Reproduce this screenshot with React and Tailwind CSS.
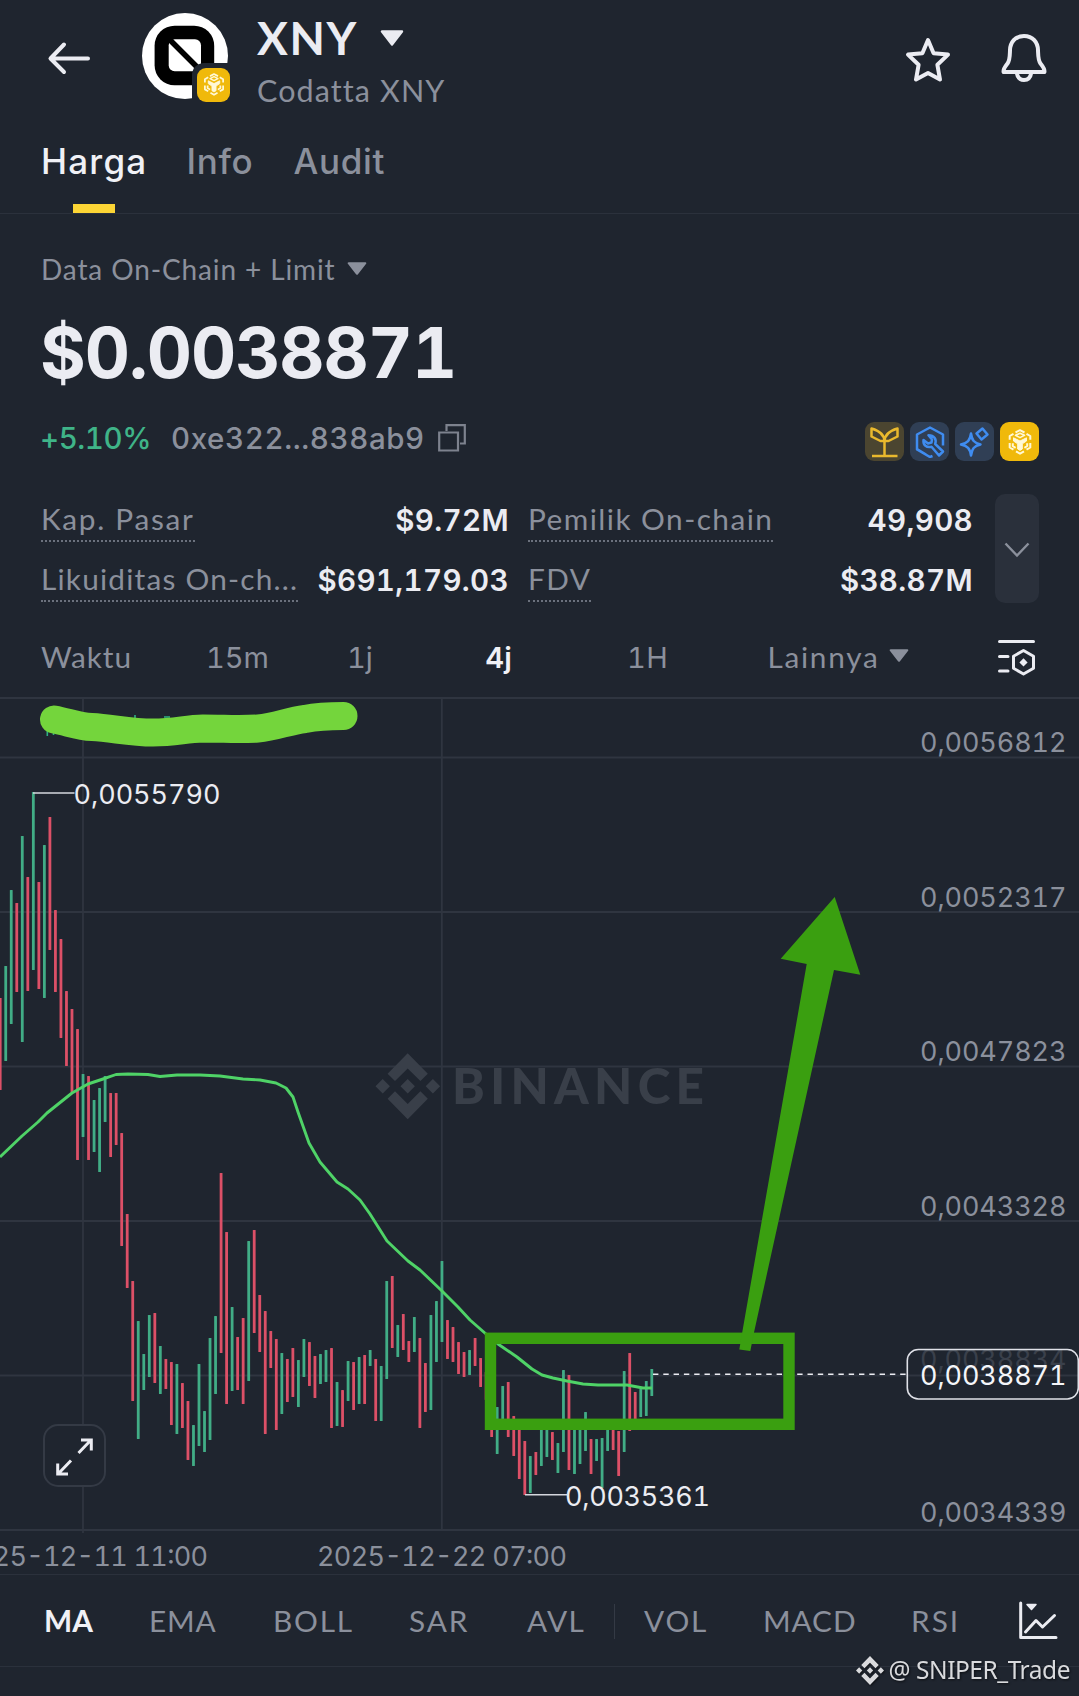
import React from "react";

/* Candle ranges, oldest first: [direction, high y, low y] */
const CANDLES = [
  ["d",998,1090],["u",966,1061],["u",890,1024],["d",903,992],["u",836,1042],["d",877,991],["u",792,970],["d",882,989],
  ["u",845,998],["d",817,950],["d",910,992],["d",939,1038],["d",991,1066],["d",1009,1092],["d",1029,1160],["u",1074,1137],
  ["d",1076,1160],["u",1100,1152],["u",1088,1172],["u",1076,1122],["d",1093,1157],["d",1093,1145],["d",1133,1246],["d",1214,1288],
  ["d",1281,1401],["u",1321,1439],["u",1354,1390],["u",1315,1377],["d",1313,1383],["u",1346,1394],["d",1359,1389],["d",1362,1425],
  ["u",1364,1434],["d",1383,1428],["d",1401,1460],["u",1425,1466],["u",1364,1446],["u",1411,1452],["u",1338,1440],["u",1316,1394],
  ["d",1173,1353],["d",1232,1404],["u",1307,1391],["d",1337,1390],["d",1318,1404],["u",1241,1381],["d",1230,1333],["d",1295,1352],
  ["d",1311,1434],["d",1331,1368],["d",1339,1430],["u",1353,1414],["d",1359,1402],["d",1348,1397],["u",1360,1407],["u",1339,1377],
  ["d",1342,1386],["d",1356,1398],["u",1354,1384],["u",1350,1382],["d",1348,1428],["u",1382,1426],["d",1390,1427],["u",1361,1401],
  ["d",1362,1410],["u",1357,1404],["d",1355,1404],["u",1350,1366],["d",1359,1421],["u",1366,1421],["u",1281,1379],["d",1276,1348],
  ["u",1325,1357],["d",1314,1350],["d",1341,1362],["u",1317,1352],["d",1338,1428],["d",1363,1412],["u",1315,1410],["u",1301,1362],
  ["u",1261,1342],["d",1320,1359],["d",1327,1362],["d",1342,1374],["d",1352,1377],["u",1350,1375],["d",1338,1366],["d",1358,1387],
  ["d",1372,1400],["d",1395,1437],["u",1407,1454],["u",1386,1420],["d",1382,1437],["d",1416,1456],["d",1428,1479],["d",1441,1495],
  ["u",1456,1493],["d",1452,1475],["u",1425,1466],["u",1425,1457],["d",1432,1460],["u",1443,1473],["u",1370,1452],["d",1375,1470],
  ["u",1425,1474],["u",1429,1464],["u",1412,1451],["d",1439,1474],["u",1439,1461],["u",1438,1488],["u",1425,1451],["d",1425,1450],
  ["d",1431,1476],["u",1371,1452],["d",1353,1431],["d",1392,1420],["u",1389,1417],["u",1381,1416],["u",1369,1396],
];
const STEP = 5.522;

const MA_LINE =
  "0,1157 22,1136 38,1122 47,1113 72,1093 88,1084 103,1079 116,1074.5 128,1074 148,1074.5 160,1076.500 177,1075 200,1075 220,1076 243,1079 260,1080 276,1083 286,1088 293,1097 298,1112 309,1143 320,1162 337,1182 348,1189 360,1200 370,1214 387,1241 408,1261 420,1270 442,1291 458,1307 470,1320 486,1334 498,1344 517,1357 532,1369 542,1375 553,1378 567,1381 583,1384 598,1385 627,1385 643,1388 652,1388";

const AXIS = [
  ["0,0056812", 751.5],
  ["0,0052317", 907],
  ["0,0047823", 1061],
  ["0,0043328", 1216],
  ["0,0034339", 1521.5],
];

function Caret({ className }) {
  return (
    <svg className={className} viewBox="0 0 24 16" preserveAspectRatio="none">
      <path d="M2 1.5H22L12 14.5Z" fill="currentColor" stroke="currentColor" strokeWidth="2.4" strokeLinejoin="round" />
    </svg>
  );
}

function ChainMark({ className }) {
  return (
    <svg className={className} viewBox="0 0 24 26" fill="none" stroke="#fff8d6" strokeWidth="2" strokeLinejoin="round">
      <path d="M7.5 3.500 12 1.200 16.500 3.500M18.500 4.800 22.300 7V10.800M22.300 14V18.500L18.500 20.700M16 22.400 12 24.700 8 22.400M5.500 20.700 1.700 18.500V14M1.700 10.800V7L5.500 4.800" />
      <path d="M7.500 6.300 12 4.200 16.500 6.300 12 8.600Z" strokeWidth="1.600" />
      <path d="M5.500 8.800 12 12 18.500 8.800V12L14.300 14.800V20L12 21.400 9.700 20V14.800L5.500 12Z" fill="#fff8d6" strokeWidth="1" />
      <path d="M4.800 14.200V17L7.600 18.800M19.200 14.200V17L16.400 18.800" />
    </svg>
  );
}

function BinanceMark({ className }) {
  return (
    <svg className={className} viewBox="0 0 64 66" fill="currentColor">
      <path d="M32 0 52 20.2 44.6 27.6 32 15 19.4 27.6 12 20.2Z" />
      <path d="M32 66 52 45.8 44.6 38.4 32 51 19.4 38.4 12 45.8Z" />
      <path d="M32 25.8 39.2 33 32 40.2 24.8 33Z" />
      <path d="M7.2 25.8 14.4 33 7.2 40.2 0 33Z" />
      <path d="M56.8 25.8 64 33 56.8 40.2 49.6 33Z" />
    </svg>
  );
}

function Header() {
  return (
    <header className="flex h-[126px]">
      <svg className="ml-[47px] mt-[40px] h-[36px] w-[44px] shrink-0" viewBox="0 0 44 36" fill="none" stroke="#ebecf2" strokeWidth="4" strokeLinecap="round" strokeLinejoin="round">
        <path d="M41 18.500H4M17 4.500 3.500 18.500 17 32" />
      </svg>
      <div className="relative ml-[51px] mt-[13px] h-[89px] w-[88px] shrink-0">
        <svg className="h-[86px] w-[86px]" viewBox="0 0 86 86">
          <circle cx="43" cy="43" r="43" fill="#fff" />
          <rect x="12.6" y="12.7" width="59.6" height="59.6" rx="20" fill="#000" />
          <rect x="26.7" y="26.3" width="32.3" height="32" rx="6" fill="#fff" />
          <path d="M26 25 58 57" stroke="#000" strokeWidth="5.500" />
        </svg>
        <div className="absolute left-[50px] top-[50px] flex h-[43px] w-[43px] items-center justify-center rounded-tl-[12px] bg-[#1f252f]">
          <div className="flex h-[34px] w-[33px] items-center justify-center rounded-[9px] bg-[#f0b90b]">
            <ChainMark className="h-[23px] w-[22px]" />
          </div>
        </div>
      </div>
      <div className="ml-[27px] mt-[13px] flex flex-col">
        <div className="flex items-start">
          <span className="w-[123px] font-['Lato',sans-serif] text-[46px] font-bold leading-[50px] tracking-[1.6px] text-[#ebecf2]">XNY</span>
          <Caret className="mt-[17px] h-[16px] w-[24px] text-[#ebecf2]" />
        </div>
        <span className="mt-[7px] whitespace-nowrap font-['Lato',sans-serif] text-[30.5px] leading-[40px] tracking-[1.1px] text-[#8b909c]">Codatta XNY</span>
      </div>
      <svg className="ml-auto mt-[36px] h-[48px] w-[48px]" viewBox="0 0 48 48" fill="none" stroke="#ebecf2" strokeWidth="4" strokeLinejoin="round">
        <path d="M24 4 29.6 17.2 44 18.6 33.4 28.8 36 43.5 24 37 12 43.5 14.6 28.8 4 18.6 18.4 17.2Z" />
      </svg>
      <svg className="ml-[47px] mr-[30px] mt-[32px] h-[52px] w-[50px]" viewBox="0 0 50 52" fill="none" stroke="#ebecf2" strokeWidth="4" strokeLinejoin="round">
        <path d="M25 4C16 4 11.3 10.5 11 18 10.8 24 11 28 8.5 31.5 6.2 34.5 4 37 4.6 40H45.4C46 37 43.8 34.5 41.5 31.5 39 28 39.2 24 39 18 38.7 10.5 34 4 25 4Z" />
        <path d="M17.8 41C18.5 45.5 21.2 48 25 48S31.5 45.5 32.2 41" />
      </svg>
    </header>
  );
}

function PageTabs() {
  return (
    <nav className="flex h-[88px] border-b border-[#2b313c] pl-[41px] pt-[10px] font-['Inter',sans-serif] text-[35px] font-medium leading-[50px] tracking-[0.7px] text-[#8b909c]">
      <div className="flex w-[145.5px] flex-col">
        <span className="tracking-[1.2px] text-[#f0f1f6]">Harga</span>
        <span className="ml-[32px] mt-[18px] h-[9px] w-[42px] bg-[#fcd535]" />
      </div>
      <span className="w-[107px]">Info</span>
      <span>Audit</span>
    </nav>
  );
}

function TokenBadges() {
  return (
    <div className="ml-auto flex gap-[6px]">
      <span className="flex h-[39px] w-[39px] items-center justify-center rounded-[9px] bg-[#4b4530]">
        <svg className="h-[32px] w-[30px]" viewBox="0 0 30 32" fill="none" stroke="#eab92d" strokeWidth="2.5" strokeLinejoin="round">
          <path d="M14.500 30V15M2 30H27.500M14.500 15.500C14.500 9 10 5 1.500 2.500V10.500L10.500 15H18.500L27.500 10.500V2.500C19 5 14.500 9 14.500 15.500" />
        </svg>
      </span>
      <span className="flex h-[39px] w-[39px] items-center justify-center rounded-[9px] bg-[#303f55]">
        <svg className="h-[32px] w-[30px]" viewBox="0 0 30 32" fill="none" stroke="#3f8cf0" strokeWidth="2.5" strokeLinejoin="round">
          <path d="M17.500 30 15 31 2 23.500V8.500L15 1.500 28 8.500V19.500M2 23 11 28.500" />
          <path d="M8.500 14C8 19 11.500 22 16.500 20.800L24 29.500 28 25.500 20.200 18C21.800 13 19 9.200 13.500 9.200L17 13.500 16.500 16.500 13 17.500Z" />
        </svg>
      </span>
      <span className="flex h-[39px] w-[39px] items-center justify-center rounded-[9px] bg-[#303f55]">
        <svg className="h-[32px] w-[32px]" viewBox="0 0 32 32" fill="none" stroke="#3f8cf0" strokeWidth="2.5" strokeLinejoin="round">
          <path d="M12 7.500C13 14.500 15 17 21.500 18.500 15 20 13 22.500 12 29.500 11 22.500 8.500 20 2 18.500 8.500 17 11 14.500 12 7.500Z" />
          <path d="M23.500 2.500 28.500 8.500 22.500 13.500 17.500 7.500Z" />
        </svg>
      </span>
      <span className="flex h-[39px] w-[39px] items-center justify-center rounded-[9px] bg-[#f0b90b]">
        <ChainMark className="h-[26px] w-[24px]" />
      </span>
    </div>
  );
}

function Stat({ label, value, labelClass = "tracking-[1.45px]" }) {
  return (
    <div className="flex h-[48px] justify-between">
      <span className={`${labelClass} h-[48px] whitespace-nowrap border-b-2 border-dotted border-[#6b717d] font-['Lato',sans-serif] text-[29.8px] leading-[50px] text-[#8b909c]`}>{label}</span>
      <span className="font-['Inter',sans-serif] text-[29.5px] font-semibold leading-[53px] tabular-nums tracking-[0.35px] text-[#ebecf2]">{value}</span>
    </div>
  );
}

function Overview() {
  return (
    <section className="flex flex-col pl-[41px] pr-[40px] pt-[36px]">
      <div className="flex h-[40px]">
        <span className="w-[306px] whitespace-nowrap font-['Lato',sans-serif] text-[28px] leading-[39px] tracking-[0.88px] text-[#8b909c]">Data On-Chain + Limit</span>
        <Caret className="mt-[12px] h-[13px] w-[20px] text-[#8b909c]" />
      </div>
      <div className="-ml-px mt-[23px] h-[79px] font-['Inter',sans-serif] text-[70px] font-bold leading-[80px] tabular-nums tracking-[-1.05px] text-[#ebecf2]">$0.0038871</div>
      <div className="mt-[30px] flex h-[40px] font-['Inter',sans-serif] text-[29.5px] leading-[33px] tabular-nums">
        <span className="-ml-px w-[131px] font-medium tracking-[-0.45px] text-[#3fb488]">+5.10%</span>
        <span className="w-[267px] font-medium tracking-[0.6px] text-[#8b909c]">0xe322...838ab9</span>
        <svg className="mt-[2px] h-[28px] w-[28px]" viewBox="0 0 28 28" fill="none" stroke="#7d828e" strokeWidth="2.2">
          <path d="M1.200 8.500H20V26.500H1.200ZM8.500 7V1.200H26.800V19.500H22" />
        </svg>
        <TokenBadges />
      </div>
      <div className="mt-[32px] flex h-[109px]">
        <div className="flex w-[468px] flex-col gap-[12px]">
          <Stat label="Kap. Pasar" value="$9.72M" labelClass="tracking-[1.7px]" />
          <Stat label="Likuiditas On-ch..." value="$691,179.03" labelClass="tracking-[1.2px]" />
        </div>
        <div className="ml-[19px] flex w-[445px] flex-col gap-[12px]">
          <Stat label="Pemilik On-chain" value="49,908" />
          <Stat label="FDV" value="$38.87M" />
        </div>
        <button className="ml-auto flex w-[44px] items-center justify-center rounded-[10px] bg-[#2a303b] pt-[3px]">
          <svg className="h-[16px] w-[26px]" viewBox="0 0 26 16" fill="none" stroke="#8b909c" strokeWidth="2.400">
            <path d="M1.500 1.500 13 13.500 24.500 1.500" />
          </svg>
        </button>
      </div>
    </section>
  );
}

function Intervals() {
  return (
    <nav className="mt-[30px] flex h-[64px] pl-[41px] font-['Inter',sans-serif] text-[29px] leading-[49px] text-[#8b909c]">
      <span className="w-[165px] font-['Lato',sans-serif] text-[29.8px] leading-[47px] tracking-[0.9px]">Waktu</span>
      <span className="w-[141px] tabular-nums">15m</span>
      <span className="w-[138px] tabular-nums">1j</span>
      <span className="w-[142px] font-semibold text-[#f0f1f6]">4j</span>
      <span className="w-[140.500px] tabular-nums tracking-[0.5px]">1H</span>
      <span className="w-[121.500px] font-['Lato',sans-serif] text-[29.8px] leading-[47px] tracking-[1.7px]">Lainnya</span>
      <Caret className="mt-[16px] h-[13px] w-[20px]" />
      <svg className="ml-[87px] mt-[4px] h-[40px] w-[42px]" viewBox="0 0 42 40" fill="none" stroke="#ebecf2" strokeWidth="3" strokeLinecap="round">
        <path d="M3.500 4.500H37.500M3.500 19.500H12M3.500 34H12" />
        <path d="M27.500 13.500 37.500 19.200V31.300L27.500 37 17.500 31.300V19.200Z" strokeLinejoin="round" />
        <path d="M27.500 21.300 31.600 25.400 27.500 29.500 23.400 25.400Z" fill="#ebecf2" stroke="none" />
      </svg>
    </nav>
  );
}

function Chart() {
  return (
    <div className="relative h-[877px]">
      <svg className="block h-[877px] w-[1079px] font-['Inter',sans-serif] tabular-nums" viewBox="0 697 1079 877">
        <g stroke="#2f3540" strokeWidth="1.8">
          <path d="M0 698H1079M83 698V1533M441.800 698V1530" />
          <path d="M0 757.500H1079M0 912H1079M0 1066.500H1079M0 1221H1079M0 1375.500H1079M0 1530H1079" />
        </g>
        <g fontSize="27" fill="#8b909c">
          {AXIS.map(([label, y]) => (
            <text key={label} x="920" y={y} textLength="146.500">{label}</text>
          ))}
          <text x="-41" y="1565.500" textLength="249">2025-12-11 11:00</text>
          <text x="317" y="1565.500" textLength="250">2025-12-22 07:00</text>
          <text x="920" y="1369" textLength="146.500" fill="#3a404b">0,0038834</text>
        </g>
        <g fill="#393f49">
          <path d="M407.700 1053.300 427.800 1073.700 420.400 1081.100 407.700 1068.400 395 1081.100 387.600 1073.700Z" />
          <path d="M407.700 1119.300 427.800 1098.700 420.400 1091.300 407.700 1104 395 1091.300 387.600 1098.700Z" />
          <path d="M407.700 1079 414.900 1086.200 407.700 1093.400 400.500 1086.200ZM382.700 1079 389.900 1086.200 382.700 1093.400 375.500 1086.200ZM432.900 1079 440.100 1086.200 432.900 1093.400 425.700 1086.200Z" />
          <text x="452" y="1104" fontSize="49.500" textLength="252" className="font-['Lato',sans-serif] font-black">BINANCE</text>
        </g>
        {CANDLES.map(([dir, high, low], i) => (
          <rect key={i} x={i * STEP - 1.2} y={high} width="2.800" height={low - high} rx="0.500" fill={dir === "u" ? "#41ad86" : "#dc5067"} />
        ))}
        <polyline points={MA_LINE} fill="none" stroke="#4fd367" strokeWidth="2.900" strokeLinejoin="round" />
        <path d="M33 793H74.500M525 1494.700H567" stroke="#d5d7de" strokeWidth="1.600" />
        <path d="M653 1374.300H906" stroke="#ebecf2" strokeWidth="1.600" strokeDasharray="5.400 4.900" />
        <g fontSize="27" fill="#ebecf2">
          <text x="73.500" y="803.500" textLength="147">0,0055790</text>
          <text x="565" y="1505.500" textLength="145">0,0035361</text>
        </g>
        <rect x="907.300" y="1349.500" width="171" height="49.500" rx="11" fill="none" stroke="#dfe1e8" strokeWidth="1.600" />
        <text x="920" y="1384.500" fontSize="27" fill="#f4f5f9" textLength="146.500">0,0038871</text>
        <path d="M47.300 728V736M53.500 728V735M135 715V722M164 717H170" stroke="#2fae84" strokeWidth="1.600" />
        <path d="M54 719.500C68 722 78 726.500 92 727 112 728 130 732.500 153 732.500 175 732.500 185 729 203 728.500 225 728.500 238 730 258 728.500 276 727 288 721 305 719 320 716 332 716 343.500 716" fill="none" stroke="#74d53c" strokeWidth="28" strokeLinecap="round" />
        <rect x="490.500" y="1338.300" width="298.500" height="86" fill="none" stroke="#3a9f10" strokeWidth="11.400" />
        <path d="M834.700 897 780.700 958.800 806.700 964 742.300 1332 739.300 1349.500 750.300 1351 754 1332.400 834 969.900 860.300 974.700Z" fill="#3a9f10" />
      </svg>
      <button className="absolute left-[43px] top-[727px] h-[63px] w-[62.500px] rounded-[15px] border-2 border-[#343a45] bg-[#1f252f]">
        <svg className="h-[58px] w-[58px]" viewBox="0 0 58 58" fill="none" stroke="#ebecf2" strokeWidth="3">
          <path d="M33.500 26 46 13M36 13H46.300V23.500M26 33.500 13.500 46.500M12.700 36.500V47H23" />
        </svg>
      </button>
    </div>
  );
}

function Indicators() {
  return (
    <nav className="flex h-[93px] border-y border-[#2b313c] pl-[44px] font-['Lato',sans-serif] text-[29.8px] leading-[92px] tracking-[1.4px] text-[#8b909c]">
      <span className="w-[105px] font-bold tracking-[0.1px] text-[#f0f1f6]">MA</span>
      <span className="w-[124px] tracking-[0.8px]">EMA</span>
      <span className="w-[136px] tracking-[1.8px]">BOLL</span>
      <span className="w-[118px] tracking-[1.9px]">SAR</span>
      <span className="w-[87px]">AVL</span>
      <span className="mt-[29px] h-[35px] w-[30px] border-l border-[#343a45]" />
      <span className="w-[119px] tracking-[1.8px]">VOL</span>
      <span className="w-[148px] tracking-[0.9px]">MACD</span>
      <span className="w-[107px] tracking-[2px]">RSI</span>
      <svg className="mt-[25px] h-[40px] w-[40px]" viewBox="0 0 40 40" fill="none" stroke="#ebecf2" strokeWidth="3" strokeLinecap="round" strokeLinejoin="round">
        <path d="M2.700 3V37.500H38" />
        <path d="M7.500 32 18 20.500 24.500 27 36.500 15.500" />
        <path d="M9 4.500H18L13.500 9.500Z" fill="#ebecf2" strokeWidth="1.500" />
      </svg>
    </nav>
  );
}

export default function App() {
  return (
    <main className="relative flex h-[1696px] w-[1079px] flex-col overflow-hidden bg-[#1f252f]">
      <Header />
      <PageTabs />
      <Overview />
      <Intervals />
      <Chart />
      <Indicators />
      <div className="absolute bottom-[10px] right-[9px] flex items-center text-[#d9dadd] drop-shadow-[1px_1px_1px_rgba(0,0,0,0.6)]">
        <BinanceMark className="h-[29px] w-[28px]" />
        <span className="ml-[5px] whitespace-nowrap font-['Noto_Sans',sans-serif] text-[24.5px] leading-[32px] tracking-[-0.47px]">@ SNIPER_Trade</span>
      </div>
    </main>
  );
}
